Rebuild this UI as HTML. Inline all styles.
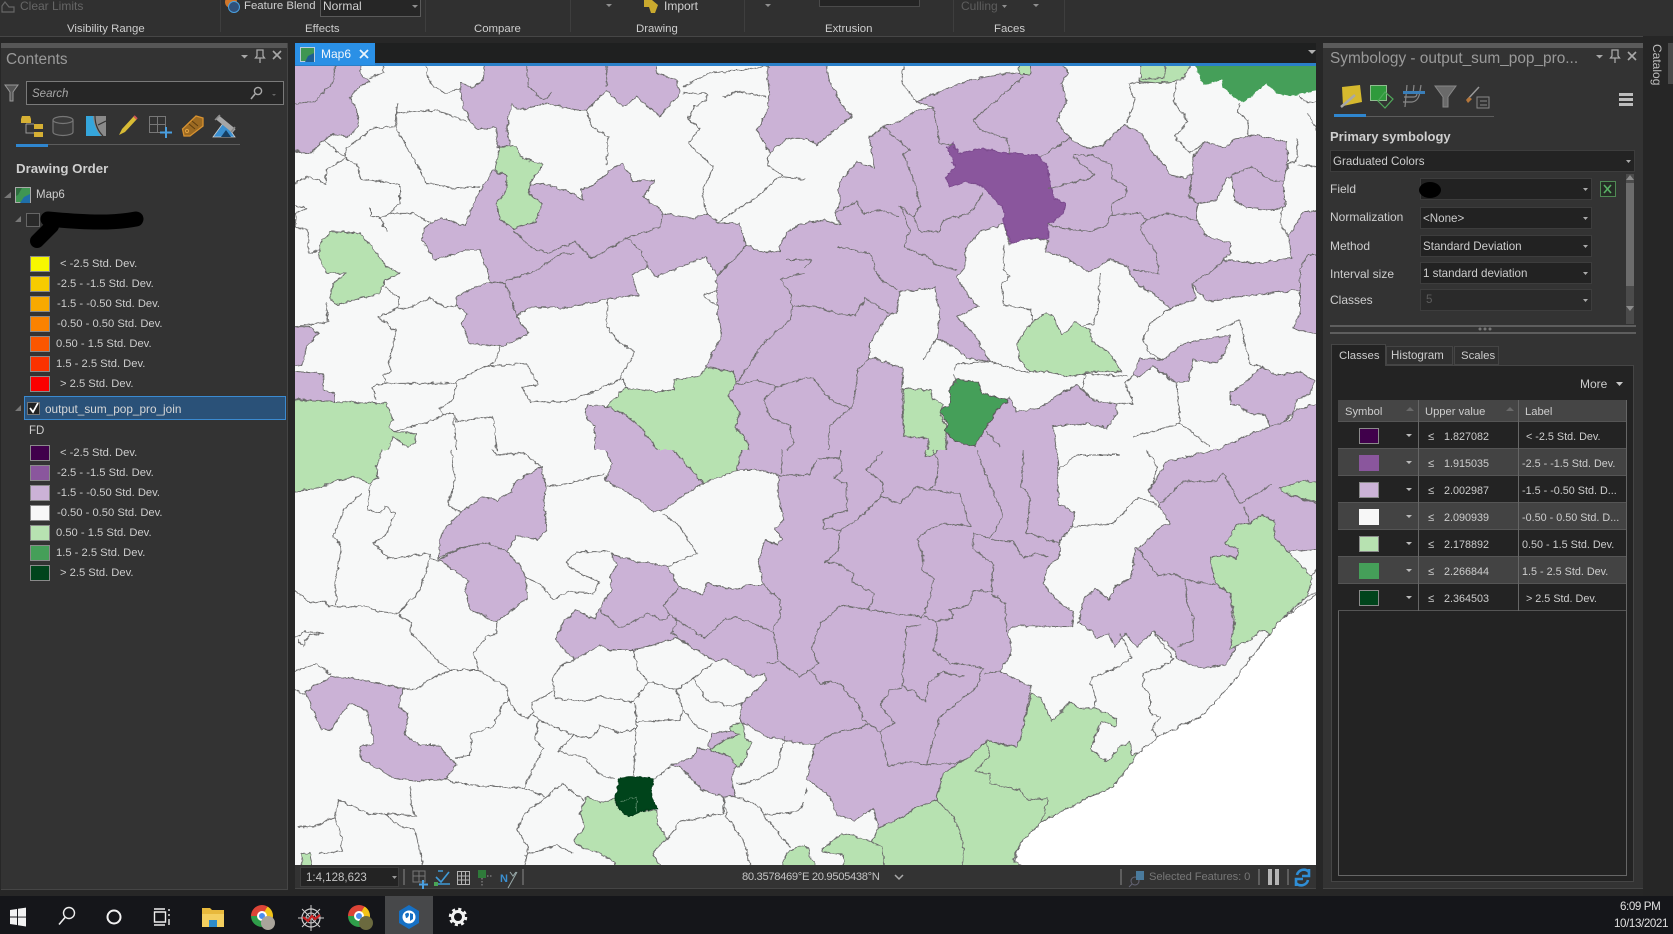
<!DOCTYPE html>
<html><head><meta charset="utf-8"><title>ArcGIS Pro</title>
<style>
html,body{margin:0;padding:0;background:#272727;}
#p{position:relative;width:1673px;height:934px;overflow:hidden;background:#272727;font-family:"Liberation Sans",sans-serif;color:#cfcfcf;}
.a{position:absolute;}
.t{position:absolute;white-space:nowrap;line-height:16px;font-size:11.2px;color:#cdcdcd;}
.sw{position:absolute;left:30px;width:18px;height:14px;border:1px solid #8a8a8a;}
.box{position:absolute;left:1420px;width:172px;background:#222;border:1px solid #3d3d3d;box-sizing:border-box;}
.ss{position:absolute;left:1359px;width:20px;height:16px;border:1px solid #8a8a8a;box-sizing:border-box;}
.row{position:absolute;left:1338px;width:288px;height:27px;box-sizing:border-box;border-bottom:1px solid #555;}
.chrome{position:absolute;width:22px;height:22px;border-radius:50%;background:conic-gradient(from 30deg,#f2c318 0 120deg,#2f9e4a 120deg 240deg,#dc4437 240deg 360deg);}
.chrome:after{content:"";position:absolute;left:6px;top:6px;width:6px;height:6px;background:#4a8ef0;border:2px solid #fff;border-radius:50%;}
#map{position:absolute;left:295px;top:66px;width:1021px;height:799px;overflow:hidden;background:#f7f8f8;}
#inner{position:absolute;left:-5px;top:-16px;width:1030px;height:820px;filter:url(#w);}
#inner svg{position:absolute;display:block;}
.P{fill:#cbb2d6;stroke:#6b6b6b;stroke-width:3;stroke-linejoin:round;}
.G{fill:#b7e2b1;stroke:#6b6b6b;stroke-width:3;stroke-linejoin:round;}
.D{fill:#459f59;stroke:#5a5a5a;stroke-width:3;stroke-linejoin:round;}
.L{fill:none;stroke:#6e6e6e;stroke-width:3;stroke-linejoin:round;}
</style></head><body><div id="p">

<svg width="0" height="0" style="position:absolute"><filter id="w" x="0" y="0" width="100%" height="100%" color-interpolation-filters="sRGB"><feTurbulence type="fractalNoise" baseFrequency="0.18" numOctaves="3" seed="4" result="n"/><feDisplacementMap in="SourceGraphic" in2="n" scale="4.5" xChannelSelector="R" yChannelSelector="G"/></filter></svg>

<!-- ribbon -->
<div class="a" style="left:0;top:0;width:1673px;height:36px;background:#303030;border-bottom:1px solid #464646"></div>
<div class="a" style="left:220px;top:0;width:1px;height:32px;background:#3e3e3e"></div>
<div class="a" style="left:425px;top:0;width:1px;height:32px;background:#3e3e3e"></div>
<div class="a" style="left:570px;top:0;width:1px;height:32px;background:#3e3e3e"></div>
<div class="a" style="left:744px;top:0;width:1px;height:32px;background:#3e3e3e"></div>
<div class="a" style="left:953px;top:0;width:1px;height:32px;background:#3e3e3e"></div>
<div class="a" style="left:1064px;top:0;width:1px;height:32px;background:#3e3e3e"></div>
<div class="t" style="left:20px;top:-2px;color:#666;font-size:12px">Clear Limits</div>
<div class="t" style="left:244px;top:-2px;font-size:11.4px;color:#d0d0d0">Feature Blend</div>
<div class="a" style="left:320px;top:-2px;width:99px;height:17px;background:#262626;border:1px solid #5a5a5a"></div>
<div class="t" style="left:323px;top:-2px;font-size:12px;color:#d0d0d0">Normal</div>
<div class="t" style="left:664px;top:-2px;font-size:12px;color:#d0d0d0">Import</div>
<div class="a" style="left:819px;top:-2px;width:99px;height:7px;background:#242424;border:1px solid #4a4a4a"></div>
<div class="t" style="left:961px;top:-2px;font-size:12px;color:#5e5e5e">Culling</div>
<div class="t" style="left:67px;top:21px;font-size:11.4px">Visibility Range</div>
<div class="t" style="left:305px;top:21px;font-size:11.4px">Effects</div>
<div class="t" style="left:474px;top:21px;font-size:11.4px">Compare</div>
<div class="t" style="left:636px;top:21px;font-size:11.4px">Drawing</div>
<div class="t" style="left:825px;top:21px;font-size:11.4px">Extrusion</div>
<div class="t" style="left:994px;top:21px;font-size:11.4px">Faces</div>

<!-- contents panel -->
<div class="a" style="left:1px;top:43px;width:286px;height:846px;background:#333;border-right:1px solid #454545;border-bottom:1px solid #454545;box-sizing:content-box"></div>
<div class="a" style="left:1px;top:43px;width:286px;height:5px;background:#565656"></div>
<div class="t" style="left:6px;top:51px;font-size:15.4px;line-height:18px;color:#9a9a9a">Contents</div>
<div class="a" style="left:26px;top:81px;width:258px;height:24px;box-sizing:border-box;background:#262626;border:1px solid #7a7a7a"></div>
<div class="t" style="left:32px;top:86px;font-style:italic;font-size:11.5px;color:#a8a8a8">Search</div>
<div class="a" style="left:16px;top:144px;width:224px;height:1px;background:#5c5c5c"></div>
<div class="a" style="left:16px;top:144px;width:32px;height:3px;background:#2f86cf"></div>
<div class="t" style="left:16px;top:161px;font-size:13.3px;font-weight:bold;color:#cfcfcf">Drawing Order</div>
<div class="t" style="left:36px;top:187px;font-size:11.5px">Map6</div>
<div class="a" style="left:26px;top:213px;width:14px;height:14px;box-sizing:border-box;background:#2a2a2a;border:1px solid #666"></div>

<div class="sw" style="top:256px;background:#f7f700"></div><div class="t" style="left:60px;top:256px">&lt; -2.5 Std. Dev.</div>
<div class="sw" style="top:276px;background:#f6cb00"></div><div class="t" style="left:57px;top:276px">-2.5 - -1.5 Std. Dev.</div>
<div class="sw" style="top:296px;background:#f8a900"></div><div class="t" style="left:57px;top:296px">-1.5 - -0.50 Std. Dev.</div>
<div class="sw" style="top:316px;background:#fa8200"></div><div class="t" style="left:57px;top:316px">-0.50 - 0.50 Std. Dev.</div>
<div class="sw" style="top:336px;background:#fa5600"></div><div class="t" style="left:56px;top:336px">0.50 - 1.5 Std. Dev.</div>
<div class="sw" style="top:356px;background:#fa3200"></div><div class="t" style="left:56px;top:356px">1.5 - 2.5 Std. Dev.</div>
<div class="sw" style="top:376px;background:#fa0000"></div><div class="t" style="left:60px;top:376px">&gt; 2.5 Std. Dev.</div>

<div class="a" style="left:24px;top:396px;width:262px;height:24px;box-sizing:border-box;background:#2a5178;border:1px solid #3b8ad0"></div>
<div class="a" style="left:27px;top:402px;width:13px;height:13px;box-sizing:border-box;background:#222;border:1px solid #777"></div>
<div class="t" style="left:45px;top:401px;font-size:11.8px;color:#d6d6d6">output_sum_pop_pro_join</div>
<div class="t" style="left:29px;top:423px;font-size:11.5px">FD</div>

<div class="sw" style="top:445px;background:#40004b"></div><div class="t" style="left:60px;top:445px">&lt; -2.5 Std. Dev.</div>
<div class="sw" style="top:465px;background:#8a569d"></div><div class="t" style="left:57px;top:465px">-2.5 - -1.5 Std. Dev.</div>
<div class="sw" style="top:485px;background:#cbb2d6"></div><div class="t" style="left:57px;top:485px">-1.5 - -0.50 Std. Dev.</div>
<div class="sw" style="top:505px;background:#f7f7f7"></div><div class="t" style="left:57px;top:505px">-0.50 - 0.50 Std. Dev.</div>
<div class="sw" style="top:525px;background:#b7e2b1"></div><div class="t" style="left:56px;top:525px">0.50 - 1.5 Std. Dev.</div>
<div class="sw" style="top:545px;background:#459f59"></div><div class="t" style="left:56px;top:545px">1.5 - 2.5 Std. Dev.</div>
<div class="sw" style="top:565px;background:#00441b"></div><div class="t" style="left:60px;top:565px">&gt; 2.5 Std. Dev.</div>

<!-- tab strip -->
<div class="a" style="left:295px;top:43px;width:1021px;height:20px;background:#1f2020"></div>
<div class="a" style="left:295px;top:63px;width:1021px;height:3px;background:#2a7fc8"></div>
<div class="a" style="left:295px;top:43px;width:80px;height:22px;background:#2a90e6"></div>
<div class="t" style="left:321px;top:46px;font-size:12px;color:#f0f6fb">Map6</div>

<!-- MAP -->
<div id="map"><div id="inner">
<svg style="left:0;top:0" width="515" height="400" viewBox="0 0 1545 1200">
<rect x="0" y="0" width="1600" height="1300" fill="#f7f8f8"/>
<path class="P" d="M-30,30 L215,30 L210,70 L235,95 L205,115 L180,140 L200,180 L205,230 L175,262 L130,250 L90,280 L60,312 L-30,295Z"/>
<path class="P" d="M585,30 L1100,30 L1100,70 L1160,90 L1170,130 L1110,200 L1040,140 L1000,170 L975,150 L950,120 L890,180 L860,180 L770,160 L690,180 L665,160 L650,235 L660,290 L620,290 L620,232 L565,240 L540,215 L515,150 L510,95 L545,115 L580,90Z"/>
<path class="P" d="M1440,30 L1600,30 L1600,270 L1530,265 L1490,265 L1440,310 L1400,240 L1430,190 L1440,130 L1430,70Z"/>
<path class="P" d="M610,360 L650,380 L650,420 L620,460 L630,510 L670,535 L740,515 L755,460 L715,430 L720,405 L760,400 L850,430 L880,450 L870,420 L910,405 L950,370 L975,350 L1000,340 L1030,395 L1095,390 L1060,440 L1100,470 L1120,490 L1210,505 L1250,490 L1285,520 L1350,520 L1370,590 L1340,620 L1280,675 L1245,620 L1175,650 L1100,680 L1075,650 L1025,675 L1045,735 L955,745 L830,775 L720,770 L680,800 L645,700 L600,695 L570,600 L530,600 L435,630 L395,570 L405,530 L455,505 L525,525 L560,440Z"/>
<path class="P" d="M605,695 L645,700 L680,800 L715,850 L635,890 L540,880 L515,820 L530,790 L500,765 L500,740 L550,715Z"/>
<path class="P" d="M-30,830 L60,830 L85,850 L50,890 L35,945 L-30,950Z"/>
<path class="P" d="M-30,960 L60,968 L100,970 L100,1020 L135,1030 L135,1056 L-30,1045Z"/>
<path class="P" d="M890,1065 L950,1070 L1000,1090 L1050,1130 L1110,1210 L915,1210 L915,1130 L885,1095Z"/>
<path class="P" d="M1600,525 L1530,525 L1490,545 L1470,590 L1470,605 L1410,605 L1370,585 L1340,620 L1280,680 L1280,720 L1285,800 L1295,860 L1245,950 L1330,965 L1340,1000 L1315,1035 L1350,1090 L1335,1130 L1375,1180 L1380,1220 L1600,1220Z"/>
<path class="G" d="M630,290 L680,290 L700,325 L760,345 L720,400 L715,430 L755,460 L740,515 L670,535 L630,510 L620,460 L650,420 L650,380 L615,358Z"/>
<path class="G" d="M95,570 L125,545 L210,550 L260,610 L290,650 L330,670 L285,690 L270,730 L210,745 L145,765 L120,745 L130,700 L170,670 L110,670 L85,620Z"/>
<path class="G" d="M-30,1048 L135,1056 L290,1060 L310,1110 L295,1130 L310,1145 L378,1150 L375,1180 L350,1190 L310,1160 L285,1220 L-30,1220Z"/>
<path class="G" d="M950,1070 L1005,1015 L1100,1025 L1150,1020 L1155,990 L1220,980 L1250,955 L1330,965 L1340,1000 L1315,1035 L1350,1090 L1335,1130 L1375,1180 L1380,1220 L1120,1220 L1050,1130 L1000,1090Z"/>
<path class="L" d="M15,160 L75,155 L130,95 L135,48 M710,48 L715,110 L760,150 L785,128 M950,48 L950,110
M670,540 L720,590 L770,610 L855,575 L880,600 L905,625 L1010,565 L1110,530 L1120,490 M645,695 L740,660 L815,610 L855,610 M1010,565 L1050,600 L1075,650
M1560,765 L1510,770 L1500,810 L1420,880 L1340,1000 M1340,1005 L1400,990 L1460,1010 L1560,980 M1460,1010 L1420,1050 L1440,1100 L1500,1130 L1510,1180 L1490,1200 M1470,690 L1500,680 L1560,665 M1470,690 L1500,730 L1510,770 M1490,630 L1560,630
M405,48 L420,100 L465,130 L510,115 M280,48 L280,70 L235,85 M320,160 L315,230 L250,235 L170,295 L165,320 L100,270 M320,160 L320,235 L350,290 L390,360 L410,400 L490,415 L570,410 M320,190 L440,180 L530,215
M165,325 L205,350 L210,385 L330,405 L330,460 L300,490 L370,490 L425,520 M15,300 L60,312 M165,325 L110,360 L105,400 L50,380 L15,400 M240,470 L240,500 L270,500 L290,545 L270,505 L300,490 M15,465 L50,475 L20,490 L15,530 L55,540 L55,610 L85,600
M285,710 L325,745 L325,775 L350,775 L420,745 L470,775 L500,765 M110,760 L115,815 L15,830 M325,775 L265,800 L305,835 L320,840 L305,900 L295,940 L305,965 L280,975 L285,1000 L245,1010 L260,1050 M285,1000 L490,1000 L500,995 L580,950 L710,940 L745,1005 L695,1010 L720,1055 L830,1055 L900,1030 L1000,985 M630,890 L620,930 L590,950 M955,745 L950,830 L990,880 L1035,905 L985,990 M1000,985 L1005,1015
M500,1000 L490,1050 L450,1075 L460,1095 L405,1120 L310,1145 M460,1095 L490,1090 L500,1115 L610,1100 L620,1200 M490,1100 L500,1200
M1180,130 L1250,130 L1250,150 L1210,170 L1195,210 L1230,235 L1195,280 L1270,350 L1235,430 L1250,490 M1180,110 L1260,70 L1440,48 M1295,140 L1350,125 L1430,140 M1285,515 L1400,440 L1475,375 L1430,345 L1440,310 M1475,380 L1560,390 M1285,720 L1240,735 L1285,770 M890,180 L905,230 L955,260 L950,345"/>
</svg>

<svg style="left:515px;top:0" width="515" height="400" viewBox="15 0 1545 1200">
<rect x="0" y="0" width="1600" height="1300" fill="#f7f8f8"/>
<path class="P" d="M-30,30 L75,30 L90,100 L130,170 L155,198 L110,235 L50,285 L0,255 L-30,250Z"/>
<path class="P" d="M-50,520 L0,525 L30,515 L75,512 L122,525 L105,490 L122,450 L115,420 L120,395 L170,335 L225,355 L208,262 L250,230 L300,215 L350,180 L402,175 L350,155 L430,120 L520,88 L620,68 L660,72 L660,30 L780,30 L805,70 L785,100 L800,150 L770,215 L810,265 L860,295 L910,285 L970,225 L1025,250 L1050,300 L1095,345 L1110,375 L1155,385 L1178,370 L1165,440 L1195,460 L1190,510 L1220,560 L1290,578 L1290,610 L1240,660 L1175,700 L1190,745 L1110,775 L1060,730 L1020,710 L990,670 L985,650 L930,628 L870,665 L790,620 L735,605 L745,570 L680,565 L630,580 L610,520 L590,530 L545,540 L500,590 L490,660 L470,680 L500,730 L535,770 L470,800 L520,850 L570,935 L500,925 L470,895 L410,865 L420,790 L405,712 L370,718 L300,725 L290,790 L262,798 L210,880 L210,922 L310,955 L305,1010 L310,1160 L385,1165 L385,1250 L-50,1250Z"/>
<path class="P" d="M1170,440 L1180,320 L1215,275 L1275,295 L1305,265 L1375,255 L1460,275 L1465,345 L1450,395 L1455,470 L1420,480 L1340,475 L1305,455 L1295,380 L1280,385 L1250,450 L1195,460Z"/>
<path class="P" d="M1600,480 L1510,485 L1465,560 L1475,625 L1370,640 L1270,630 L1240,660 L1175,700 L1220,755 L1320,740 L1500,720 L1500,790 L1480,835 L1560,855 L1600,855Z"/>
<path class="P" d="M1000,970 L1020,925 L1090,930 L1140,885 L1200,870 L1290,855 L1280,900 L1250,940 L1180,930 L1165,995 L1115,995 L1060,950 L1010,985Z"/>
<path class="P" d="M1290,1065 L1290,1030 L1350,985 L1385,950 L1430,975 L1500,965 L1545,995 L1530,1030 L1490,1050 L1480,1085 L1440,1125 L1410,1130 L1395,1095 L1345,1090 L1320,1065Z"/>
<path class="P" d="M1250,1200 L1330,1160 L1410,1130 L1470,1110 L1480,1085 L1550,1060 L1600,1060 L1600,1250 L1250,1250Z"/>
<path class="P" d="M600,1060 L630,1045 L650,1085 L720,1075 L775,1035 L830,1005 L880,1050 L950,1060 L950,1090 L920,1135 L860,1120 L760,1130 L775,1250 L440,1250 L440,1150Z"/>
<path class="G" d="M1025,30 L1180,30 L1150,85 L1100,100 L1020,95Z"/>
<path class="G" d="M655,30 L690,30 L690,72 L660,72Z"/>
<path class="D" d="M1178,30 L1600,30 L1600,115 L1500,130 L1470,140 L1430,130 L1400,100 L1330,160 L1270,115 L1265,90 L1210,105Z" style="stroke:none"/>
<path d="M460,280 L475,310 L545,295 L620,310 L710,315 L745,350 L750,400 L765,445 L795,460 L790,490 L745,525 L745,565 L680,565 L635,580 L610,520 L612,480 L550,410 L500,395 L450,410 L435,385 L465,350 L442,295Z" fill="#8a569d" stroke="#7a4a8c" stroke-width="3"/>
<path class="G" d="M650,880 L690,820 L740,790 L760,800 L785,855 L825,815 L870,840 L875,875 L925,905 L965,965 L880,965 L810,980 L740,965 L690,965 L660,930Z"/>
<path class="G" d="M310,1015 L395,1020 L395,1045 L430,1065 L420,1095 L445,1135 L435,1160 L445,1250 L385,1250 L385,1165 L310,1160Z"/>
<path class="D" d="M450,1010 L470,990 L535,995 L545,1030 L590,1040 L625,1050 L590,1080 L565,1125 L520,1190 L460,1170 L435,1140 L445,1125 L420,1085 L450,1060Z"/>
<path class="L" d="M310,48 L305,100 L350,155 M985,100 L1005,150 L980,220 M990,100 L1120,95 M1130,95 L1120,155 L1165,215 L1125,260 L1170,310 L1215,275 M1320,160 L1310,185 L1345,210 L1345,260 M1500,135 L1510,155 L1550,155 M1525,190 L1550,240 M1490,265 L1490,330 L1460,345 M1490,345 L1550,350 M1450,470 L1440,520 L1465,560
M610,585 L610,660 L630,680 L605,700 L610,765 L690,780 L700,810 M900,670 L895,770 L880,820 L850,825 M1110,775 L1050,820 L1030,870 L1050,910 L1090,930 M1250,840 L1320,810 L1335,880 L1350,940 L1385,950 M460,960 L470,940 L570,935 L690,970 M810,980 L860,970 L845,1015 L880,1050 M850,970 L985,980 M975,1000 L1000,1060 L950,1060 M975,1000 L1000,975 M1060,950 L1130,1000 L1140,1120 M1140,1120 L1230,1190 M1000,1160 L1140,1120 M410,865 L370,930 M460,970 L470,1000
M250,230 L330,300 L310,310 L345,400 L360,470 L340,500 L300,470 L330,540 L310,590 L380,620 L410,645 L470,660 M105,490 L170,455 L190,490 L240,480 L300,500 M115,590 L210,610 L240,690 L295,720 M0,770 L50,770 L90,785 L165,800 L195,745 L270,790 M0,980 L40,985 L90,1050 L155,1075 M175,960 L160,1070 L90,1125 L85,1200 M670,80 L520,210 L540,240 L620,265 L630,310 M400,175 L420,280 L460,285 M810,265 L720,320 M820,315 L870,315 L935,345 L935,385 L980,410 L975,440 L935,460 L935,495 L1020,490 L1040,510 L1020,540 L1070,610 L1075,670 L1000,660 M745,415 L870,385 L885,375 L820,320 M745,525 L815,540 L860,545 L915,530 L935,495 M1040,510 L1100,490 L1190,510 M340,500 L360,545 L420,545 L430,510 L510,490 L550,430 M0,665 L35,630 L0,625 M1295,375 L1355,350 L1410,390 L1450,395 M1500,720 L1500,660 L1525,615 L1600,615 M1095,48 L1090,85 L1025,85 M175,960 L210,922 M560,1145 L600,1190"/>
</svg>

<svg style="left:0;top:400px" width="515" height="420" viewBox="0 0 1545 1260">
<rect x="0" y="0" width="1600" height="1300" fill="#f7f8f8"/>
<path class="P" d="M450,270 L460,240 L510,190 L575,140 L620,150 L665,125 L670,100 L755,50 L770,115 L760,150 L770,240 L745,268 L680,255 L650,305 L590,280 L520,290 L445,325Z"/>
<path class="P" d="M445,330 L520,292 L590,278 L650,305 L690,345 L705,380 L712,445 L620,515 L540,480 L525,420 L535,390 L490,360Z"/>
<path class="P" d="M925,-50 L1105,-50 L1240,100 L1180,135 L1120,180 L1090,185 L1050,150 L945,90 L965,40Z"/>
<path class="G" d="M1105,-50 L1365,-50 L1340,60 L1280,85 L1240,100Z"/>
<path class="G" d="M-30,-50 L295,-50 L260,50 L265,85 L235,100 L190,80 L130,95 L80,115 L15,125 L-30,130Z"/>
<path class="P" d="M1340,60 L1410,60 L1465,75 L1465,135 L1480,210 L1455,235 L1475,265 L1460,285 L1425,270 L1405,335 L1420,405 L1370,405 L1340,420 L1250,400 L1240,435 L1165,410 L1135,350 L1040,335 L965,312 L980,350 L960,380 L965,420 L925,480 L915,510 L860,480 L825,510 L795,570 L855,630 L930,585 L960,600 L1030,600 L1160,565 L1210,595 L1280,635 L1300,625 L1390,680 L1425,670 L1430,690 L1405,715 L1355,760 L1350,810 L1430,860 L1560,885 L1650,885 L1650,-50 L1365,-50Z"/>
<path class="P" d="M45,725 L125,680 L190,685 L340,715 L325,770 L355,790 L345,855 L390,885 L445,885 L470,915 L498,945 L470,985 L390,995 L310,985 L260,955 L215,930 L210,890 L255,880 L240,830 L230,780 L180,760 L150,795 L120,845 L95,835 L70,785Z"/>
<path class="P" d="M1255,885 L1265,850 L1330,842 L1350,855 L1300,870 L1260,900Z"/>
<path class="G" d="M1320,830 L1360,815 L1365,865 L1385,880 L1370,915 L1350,950 L1335,945 L1320,920 L1260,900 L1300,870 L1350,855 L1325,842Z"/>
<path class="P" d="M1140,945 L1205,925 L1225,895 L1260,900 L1320,920 L1338,945 L1325,985 L1335,1040 L1300,1040 L1235,1020 L1170,950Z"/>
<path class="G" d="M850,1175 L885,1130 L870,1090 L890,1040 L930,1060 L975,1045 L985,1075 L1015,1100 L1050,1085 L1100,1080 L1105,1125 L1130,1165 L1085,1210 L1110,1245 L1110,1300 L985,1300 L970,1235 L930,1210 L880,1195Z"/>
<path d="M975,1040 L990,985 L1030,980 L1090,985 L1085,1030 L1100,1075 L1050,1085 L1015,1100 L985,1075Z" fill="#00441b" stroke="#003a17" stroke-width="3"/>
<path d="M990,1055 L1040,1040 L1040,1085" fill="none" stroke="#6f9a7c" stroke-width="2"/>
<path class="G" d="M35,1245 L35,1210 L60,1210 L70,1270 L35,1270Z"/>
<path class="G" d="M1480,1230 L1500,1200 L1560,1180 L1650,1180 L1650,1300 L1480,1300Z"/>
<path class="L" d="M605,0 L620,15 L700,10 L755,50 M485,0 L495,90 L475,165 L515,190 M770,110 L840,100 L945,70 M240,100 L235,180 L270,190 L285,170 L315,190 L290,250 L250,280 L295,325 L420,310 L415,345 L390,420 L325,490 L265,485 L230,470 L120,470 L100,455 L60,460 L15,420 M215,130 L160,180 L130,260 L155,290 L135,400 L140,465 M420,325 L445,330 M325,495 L365,520 L360,545 L440,630 L480,660 L415,690 L375,720 L340,715 M620,515 L620,550 L590,560 L550,610 L565,660 L480,660 M565,660 L650,710 L655,750 L640,760 L610,830 L545,850 L540,915 L495,925 M655,750 L680,790 L710,805 L730,790 L725,760 L790,720 L790,680 L820,640 L855,630 M730,795 L745,810 L735,870 L760,895 L700,1015 L770,1040 L815,1000 L880,1050 M745,810 L850,855 L905,865 L930,825 L985,850 L1040,835 M790,720 L795,745 L880,755 L930,740 L1030,755 L1075,695 L1160,720 L1210,685 L1270,640 M1030,600 L1045,660 L1075,695 M1035,760 L1040,830 L1030,980 M1040,815 L1170,810 L1180,780 L1160,720 M1180,780 L1220,830 L1255,845 M850,855 L805,905 L890,925 L900,945 L940,980 L975,985 M1210,685 L1250,750 L1325,770 L1355,760 M470,985 L480,995 L550,1005 L700,1015 M360,1005 L365,1075 L380,1100 L285,1090 L320,1125 L375,1140 L400,1245 M145,1050 L135,1100 L155,1160 L155,1205 L85,1210 M135,1100 L75,1130 L20,1130 M145,1050 L230,1090 L285,1090 M770,1040 L705,1090 L680,1140 L715,1190 L705,1245 M705,1215 L800,1185 L850,1210 M15,720 L45,735 M15,665 L80,640 L125,675 M1130,1170 L1170,1115 L1300,1090 L1300,1040 M1300,1040 L1310,1100 L1360,1170 L1380,1245 M1335,1040 L1410,1070 L1420,1095 L1500,1190 M1340,1000 L1370,1000 L1460,960 L1485,860 M1420,1095 L1520,1085 L1560,1040 M1090,990 L1140,950 M15,560 L50,545 L100,550 L55,555 L40,590 L20,570 M825,340 L860,305 L960,305 M825,340 L880,375 L930,395 L910,430 L830,425 L790,450 L760,410 L705,380 M1130,350 L1220,310 L1170,230 L1120,190
M930,480 L990,535 L1075,490 L1120,510 L1140,495 L1245,565 L1300,510 L1340,500 L1450,545 L1465,630 M1120,465 L1165,415 M1120,465 L1140,495 L1160,510 L1145,550 L1210,595 M1420,405 L1470,450 L1470,500 L1450,540 M1430,640 L1470,635 L1530,680 L1560,660 M1475,0 L1475,70 M1465,75 L1560,80"/>
</svg>

<svg style="left:515px;top:400px" width="515" height="420" viewBox="15 0 1545 1260">
<rect x="0" y="0" width="1600" height="1300" fill="#f7f8f8"/>
<path d="M640,1245 L660,1180 L725,1115 L870,1040 L940,1010 L1015,910 L1075,860 L1210,795 L1310,680 L1410,550 L1440,510 L1548,435 L1650,420 L1650,1300 L640,1300Z" fill="#fff" stroke="#6b6b6b" stroke-width="3"/>
<path class="P" d="M-50,-50 L770,-50 L775,60 L775,160 L825,190 L815,235 L780,270 L780,320 L745,350 L728,400 L780,460 L820,485 L818,530 L640,528 L625,545 L635,610 L600,665 L695,710 L665,850 L650,890 L560,875 L500,925 L430,970 L410,1050 L345,1075 L310,1100 L235,1135 L220,1075 L165,1110 L110,1095 L90,1040 L20,985 L45,885 L-50,880Z"/>
<path class="G" d="M375,-30 L415,-30 L410,10 L380,20Z"/>
<path class="P" d="M835,520 L850,450 L885,415 L925,450 L950,405 L995,385 L1005,295 L1025,290 L1080,230 L1110,220 L1075,160 L1045,125 L1100,35 L1240,0 L1250,-50 L1650,-50 L1650,150 L1548,160 L1470,135 L1437,115 L1650,90 L1650,300 L1540,300 L1465,305 L1425,265 L1420,210 L1385,195 L1350,220 L1310,225 L1275,285 L1315,295 L1310,325 L1270,315 L1230,325 L1245,400 L1290,430 L1300,510 L1305,600 L1275,645 L1205,655 L1130,625 L1115,590 L1060,545 L1010,590 L975,550 L945,590 L925,550 L890,565 L860,530Z"/>
<path class="G" d="M1230,325 L1270,315 L1310,325 L1315,295 L1275,285 L1310,225 L1350,220 L1385,195 L1420,210 L1425,265 L1465,305 L1535,380 L1525,435 L1440,510 L1410,550 L1385,540 L1350,570 L1290,595 L1305,510 L1290,430 L1245,400Z"/>
<path class="G" d="M1437,115 L1510,92 L1600,105 L1600,170 L1470,135Z"/>
<path class="G" d="M410,1050 L430,970 L500,925 L560,875 L650,890 L665,850 L695,730 L725,745 L755,815 L810,755 L840,775 L885,775 L950,805 L945,830 L905,815 L870,895 L920,935 L960,890 L990,875 L995,915 L1015,910 L940,1010 L870,1040 L725,1115 L660,1180 L640,1230 L660,1245 L660,1300 L260,1300 L215,1175 L235,1135 L310,1100 L345,1075Z"/>
<path class="G" d="M65,1200 L125,1150 L215,1175 L245,1190 L260,1300 L135,1300 L130,1215 L70,1205Z"/>
<path class="G" d="M-30,1185 L20,1190 L50,1260 L-30,1270Z"/>
<path class="L" d="M120,0 L125,65 L100,85 L140,100 L140,180 L70,210 L70,235 L120,240 L115,300 L75,340 L100,335 L160,370 L155,395 L225,430 L205,480 M50,25 L120,25 M0,70 L25,75 L50,30 M250,0 L200,60 L250,100 L245,140 L300,160 L350,110 L390,120 L410,95 L415,40 L400,0 M530,0 L555,70 L610,195 L570,265 L520,250 M245,140 L170,210 L120,240 M390,120 L480,130 L500,205 L515,230 L430,220 L385,240 L350,270 L370,320 L365,360 L400,385 L385,460 L365,500 L205,480 M520,250 L520,295 L580,345 L575,425 L520,420 L505,465 L450,480 L460,505 L410,515 L370,500 M575,270 L640,275 L670,325 L710,310 L745,320 M670,0 L665,110 L690,140 L680,250 L780,280 M575,430 L615,460 L620,545 M410,515 L410,570 L400,600 L450,640 L490,640 L550,655 L530,710 L420,800 L380,945 M365,525 L320,530 L305,710 L340,725 L375,755 L385,700 L430,665 L490,680 M305,715 L270,720 L240,765 L285,820 L240,845 L265,950 L320,935 L380,945 L470,940 L500,925 M205,480 L125,465 L60,520 L35,600 L55,640 L30,660 L60,700 L110,695 L175,760 L190,810 L240,845 L205,820 L180,835 L100,850 L45,885 M30,660 L0,680 M555,670 L600,665
M1155,390 L1160,460 L1180,500 L1180,570 L1130,590 M1155,390 L1245,405 M1010,290 L1075,380 L1120,370 L1155,390 M1080,160 L1150,95 L1250,95 L1270,70 L1320,160 L1415,105 M1330,170 L1350,220
M410,1050 L460,1100 L490,1180 L490,1245 M560,880 L570,915 L525,965 L570,970 L570,1000 L660,1020 L680,1050 L745,1045 L725,1115
M995,625 L935,660 L880,680 L870,700 L890,750 L880,775 M960,550 L995,625 M1030,670 L1110,640 L1120,625 L1060,545 M1030,670 L1030,710 L1050,740 L1050,790 L1080,800 L1055,840 L1075,860 M775,60 L830,15 L870,15 L960,15 M1045,125 L1060,100 L1070,50 L1040,0 M810,230 L900,225 L940,220 L1015,140 L1070,165 M0,1080 L20,1015 M1525,435 L1548,430 M1535,380 L1548,360"/>
</svg>
</div></div>

<!-- status bar -->
<div class="a" style="left:295px;top:865px;width:1021px;height:24px;background:#333;border-bottom:1px solid #454545;box-sizing:border-box"></div>
<div class="a" style="left:300px;top:867px;width:99px;height:20px;background:#232323;border:1px solid #3e3e3e;box-sizing:border-box"></div>
<div class="t" style="left:306px;top:870px;font-size:11.5px;color:#c4c4c4">1:4,128,623</div>
<div class="t" style="left:742px;top:869px;font-size:11.2px;letter-spacing:-.33px;color:#c4c4c4">80.3578469°E 20.9505438°N</div>
<div class="t" style="left:1149px;top:869px;font-size:11.2px;letter-spacing:-.1px;color:#777">Selected Features: 0</div>

<!-- symbology panel -->
<div class="a" style="left:1323px;top:43px;width:320px;height:846px;background:#333;border-bottom:1px solid #454545;box-sizing:border-box"></div>
<div class="a" style="left:1323px;top:43px;width:320px;height:5px;background:#5a5a5a"></div>
<div class="t" style="left:1330px;top:50px;font-size:15.4px;line-height:18px;color:#9a9a9a">Symbology - output_sum_pop_pro...</div>
<div class="a" style="left:1643px;top:36px;width:30px;height:860px;background:#262626"></div>
<div class="a" style="left:1668px;top:43px;width:5px;height:41px;background:#4a4a4a"></div>
<div class="t" style="left:1637px;top:56px;font-size:12px;color:#bdbdbd;transform:rotate(90deg);width:40px;text-align:center">Catalog</div>
<div class="a" style="left:1334px;top:116px;width:160px;height:1px;background:#5c5c5c"></div>
<div class="a" style="left:1334px;top:114px;width:32px;height:3px;background:#2f86cf"></div>
<div class="t" style="left:1330px;top:129px;font-size:13px;font-weight:bold;color:#cfcfcf">Primary symbology</div>
<div class="a" style="left:1330px;top:150px;width:305px;height:22px;background:#232323;border:1px solid #3d3d3d;box-sizing:border-box"></div>
<div class="t" style="left:1333px;top:154px;font-size:11.6px">Graduated Colors</div>
<div class="t" style="left:1330px;top:181px;font-size:12px">Field</div>
<div class="t" style="left:1330px;top:209px;font-size:12px">Normalization</div>
<div class="t" style="left:1330px;top:238px;font-size:12px">Method</div>
<div class="t" style="left:1330px;top:266px;font-size:12px">Interval size</div>
<div class="t" style="left:1330px;top:292px;font-size:12px">Classes</div>
<div class="box" style="top:178px;height:22px"></div>
<div class="box" style="top:207px;height:22px"></div><div class="t" style="left:1423px;top:211px;font-size:11.6px">&lt;None&gt;</div>
<div class="box" style="top:235px;height:22px"></div><div class="t" style="left:1423px;top:239px;font-size:11.6px">Standard Deviation</div>
<div class="box" style="top:262px;height:22px"></div><div class="t" style="left:1423px;top:266px;font-size:11.6px">1 standard deviation</div>
<div class="box" style="top:289px;height:22px;background:#2a2a2a"></div><div class="t" style="left:1426px;top:292px;font-size:11.6px;color:#5c5c5c">5</div>
<div class="a" style="left:1626px;top:174px;width:8px;height:150px;background:#4b4b4b"></div>
<div class="a" style="left:1626px;top:183px;width:8px;height:103px;background:#6c6c6c"></div>
<div class="a" style="left:1330px;top:325px;width:306px;height:2px;background:#5e5e5e"></div>
<div class="a" style="left:1330px;top:332px;width:306px;height:2px;background:#5e5e5e"></div>

<!-- tabs -->
<div class="a" style="left:1331px;top:365px;width:303px;height:517px;background:#232323;border:1px solid #454545;box-sizing:border-box"></div>
<div class="a" style="left:1386px;top:346px;width:67px;height:19px;background:#303030;border:1px solid #454545;box-sizing:border-box"></div>
<div class="a" style="left:1454px;top:346px;width:45px;height:19px;background:#303030;border:1px solid #454545;box-sizing:border-box"></div>
<div class="a" style="left:1331px;top:344px;width:55px;height:22px;background:#232323;border:1px solid #454545;border-bottom:none;box-sizing:border-box"></div>
<div class="t" style="left:1339px;top:348px;font-size:11.4px">Classes</div>
<div class="t" style="left:1391px;top:348px;font-size:11.6px">Histogram</div>
<div class="t" style="left:1461px;top:348px;font-size:11.4px">Scales</div>
<div class="t" style="left:1580px;top:376px;font-size:12px">More</div>

<!-- table -->
<div class="a" style="left:1338px;top:400px;width:289px;height:476px;box-sizing:border-box;border:1px solid #666;background:#232323"></div>
<div class="row" style="top:400px;height:22px;background:#454545"></div>
<div class="row" style="top:422px;background:#232323"></div>
<div class="row" style="top:449px;background:#434343"></div>
<div class="row" style="top:476px;background:#232323"></div>
<div class="row" style="top:503px;background:#434343"></div>
<div class="row" style="top:530px;background:#232323"></div>
<div class="row" style="top:557px;background:#434343"></div>
<div class="row" style="top:584px;background:#232323"></div>
<div class="a" style="left:1418px;top:400px;width:1px;height:211px;background:#666"></div>
<div class="a" style="left:1518px;top:400px;width:1px;height:211px;background:#666"></div>
<div class="t" style="left:1345px;top:404px;font-size:11.2px">Symbol</div>
<div class="t" style="left:1425px;top:404px;font-size:11.2px">Upper value</div>
<div class="t" style="left:1525px;top:404px;font-size:11.2px">Label</div>

<div class="ss" style="top:428px;background:#40004b"></div>
<div class="ss" style="top:455px;background:#8a569d;border-color:#8a569d"></div>
<div class="ss" style="top:482px;background:#cbb2d6"></div>
<div class="ss" style="top:509px;background:#f7f7f7;border-color:#f7f7f7"></div>
<div class="ss" style="top:536px;background:#b7e2b1"></div>
<div class="ss" style="top:563px;background:#459f59;border-color:#459f59"></div>
<div class="ss" style="top:590px;background:#00441b"></div>

<div class="t" style="left:1428px;top:429px">≤</div><div class="t" style="left:1444px;top:429px;font-size:10.8px">1.827082</div><div class="t" style="left:1526px;top:429px;font-size:10.8px">&lt; -2.5 Std. Dev.</div>
<div class="t" style="left:1428px;top:456px">≤</div><div class="t" style="left:1444px;top:456px;font-size:10.8px">1.915035</div><div class="t" style="left:1522px;top:456px;font-size:10.8px">-2.5 - -1.5 Std. Dev.</div>
<div class="t" style="left:1428px;top:483px">≤</div><div class="t" style="left:1444px;top:483px;font-size:10.8px">2.002987</div><div class="t" style="left:1522px;top:483px;font-size:10.8px">-1.5 - -0.50 Std. D...</div>
<div class="t" style="left:1428px;top:510px">≤</div><div class="t" style="left:1444px;top:510px;font-size:10.8px">2.090939</div><div class="t" style="left:1522px;top:510px;font-size:10.8px">-0.50 - 0.50 Std. D...</div>
<div class="t" style="left:1428px;top:537px">≤</div><div class="t" style="left:1444px;top:537px;font-size:10.8px">2.178892</div><div class="t" style="left:1522px;top:537px;font-size:10.8px">0.50 - 1.5 Std. Dev.</div>
<div class="t" style="left:1428px;top:564px">≤</div><div class="t" style="left:1444px;top:564px;font-size:10.8px">2.266844</div><div class="t" style="left:1522px;top:564px;font-size:10.8px">1.5 - 2.5 Std. Dev.</div>
<div class="t" style="left:1428px;top:591px">≤</div><div class="t" style="left:1444px;top:591px;font-size:10.8px">2.364503</div><div class="t" style="left:1526px;top:591px;font-size:10.8px">&gt; 2.5 Std. Dev.</div>

<!-- taskbar -->
<div class="a" style="left:0;top:896px;width:1673px;height:38px;background:#15161a"></div>
<div class="a" style="left:385px;top:896px;width:48px;height:38px;background:#47484a"></div>
<div class="t" style="left:1620px;top:899px;font-size:11.6px;letter-spacing:-.4px;color:#e0e0e0">6:09 PM</div>
<div class="t" style="left:1614px;top:916px;font-size:11.6px;letter-spacing:-.4px;color:#e0e0e0">10/13/2021</div>
<div class="chrome" style="left:251px;top:905px"></div>
<div class="chrome" style="left:348px;top:905px"></div>
<div class="a" style="left:261px;top:916px;width:14px;height:14px;border-radius:50%;background:#a9a49b"></div>
<div class="a" style="left:359px;top:916px;width:14px;height:14px;border-radius:50%;background:#6b6a3f"></div>

<!-- icon overlay -->
<svg class="a" style="left:0;top:0;pointer-events:none" width="1673" height="934" viewBox="0 0 1673 934">
<!-- ribbon icons -->
<path d="M2,12 L14,12 L14,7 L9,7 L5,2 L2,6Z" fill="none" stroke="#666" stroke-width="1.2"/>
<circle cx="231" cy="2" r="6" fill="#d0762a"/><circle cx="234" cy="7" r="5.5" fill="#30507a" stroke="#4aa0e0"/>
<path d="M412,5 l6,0 l-3,3z M606,4 l6,0 l-3,3z M765,4 l6,0 l-3,3z M1002,5 l5,0 l-2.5,3z M1033,4 l6,0 l-3,3z" fill="#8f8f8f"/>
<path d="M644,0 h8 l6,5 l-3,8 h-4 l-2,-6 h-5z" fill="#c9a92e"/>
<!-- contents header -->
<path d="M241,55 l7,0 l-3.5,3.5z" fill="#a8a8a8"/>
<path d="M257,50 h6 v6 l1.5,2 h-9 l1.5,-2z M260,58 v5" fill="none" stroke="#a8a8a8" stroke-width="1.3"/>
<path d="M273,51 l8,8 M281,51 l-8,8" stroke="#a8a8a8" stroke-width="1.6"/>
<path d="M5,85 h13 l-5,7 v9 h-3 v-9z" fill="#555" stroke="#999" stroke-width="1"/>
<circle cx="258" cy="91" r="3.6" fill="none" stroke="#a8a8a8" stroke-width="1.4"/><path d="M255,94 l-4,5" stroke="#a8a8a8" stroke-width="1.6"/>
<path d="M272,94 l4,0 l-2,2z" fill="#666"/>
<!-- contents tools -->
<path d="M26,124 v9 h8 M26,124 h8" fill="none" stroke="#999" stroke-width="1"/>
<path d="M22,116 h8 l1,3 v4 h-10 v-4z M34,124 h9 v5 h-9z M34,132 h9 v5 h-9z" fill="#d6b034"/>
<path d="M53,120 v12 a10,3.5 0 0 0 20,0 v-12" fill="#3b3b3b" stroke="#777" stroke-width="1.2"/><ellipse cx="63" cy="120" rx="10" ry="3.5" fill="#3b3b3b" stroke="#777" stroke-width="1.2"/>
<rect x="86" y="116" width="20" height="20" fill="#8a8a8a"/><path d="M86,116 h7 q1,12 8,20 h-15z" fill="#35a6dc"/><path d="M95,116 q0,12 8,20 M98,125 l8,-4" stroke="#333" stroke-width="1.2" fill="none"/>
<path d="M119,135 l3,-6 l12,-13 l3,3 l-12,13z" fill="#d8bb35"/><path d="M134,116 l3,3" stroke="#c55" stroke-width="2"/>
<path d="M149.500,116.500 h16 v16 h-16z M157.500,116.500 v16 M149.500,124.500 h16" fill="none" stroke="#777" stroke-width="1"/><path d="M166,127 v11 M160,132.500 h12" stroke="#4a9fe0" stroke-width="2"/>
<path d="M182.500,129 L196,116 L203,118 L203,126 L190,136 L184,136Z" fill="#9c6a22" stroke="#d89230" stroke-width="1.300"/><path d="M189,124 l6,5 M192,121 l6,5" stroke="#5e3d10"/><circle cx="187" cy="131" r="1.600" fill="none" stroke="#e0a040"/>
<path d="M213,137 L224,122 L235,137Z" fill="#3a8fd0" stroke="#d0d0d0" stroke-width=".8"/><path d="M221,137 l5,-7 l5,7z" fill="#163f63"/><path d="M217,117 L234,131" stroke="#a6a6a6" stroke-width="5"/><path d="M220,115 l-5,5 M235,127 l-4,5" stroke="#888" stroke-width="1.500"/>
<!-- tree triangles -->
<path d="M4,198 l7,0 l0,-6z M15,222 l6,0 l0,-6z M15,411 l6,0 l0,-6z" fill="#777"/>
<!-- map icons -->
<rect x="15.500" y="187.500" width="15" height="15" fill="#3f9652" stroke="#aaa"/><path d="M20,203 l4,-6 l6,-3 v9z" fill="#1f6ea8"/><path d="M16,188 h6 l-4,7 l-2,1z" fill="#2f6e40"/>
<rect x="300.500" y="47.500" width="14" height="14" fill="#3f9652" stroke="#bcd"/><path d="M305,62 l3,-6 l6,-3 v9z" fill="#1f5e90"/>
<path d="M360,50 l8,8 M368,50 l-8,8" stroke="#eaf4fc" stroke-width="1.8"/>
<path d="M1308,50 l8,0 l-4,4z" fill="#b0b0b0"/>
<!-- scribbles -->
<path d="M48,219 C80,222 110,224 136,219" stroke="#000" stroke-width="15" stroke-linecap="round" fill="none"/>
<path d="M52,226 L37,241" stroke="#000" stroke-width="14" stroke-linecap="round" fill="none"/>
<ellipse cx="1430" cy="190" rx="11" ry="8" fill="#000"/>
<!-- checkmark -->
<path d="M30,408 l3,4 l5,-9" fill="none" stroke="#fff" stroke-width="1.8"/>
<!-- symbology header -->
<path d="M1596,55 l7,0 l-3.500,3.500z" fill="#a8a8a8"/>
<path d="M1612,50 h6 v6 l1.500,2 h-9 l1.500,-2z M1615,58 v5" fill="none" stroke="#a8a8a8" stroke-width="1.3"/>
<path d="M1628,52 l8,8 M1636,52 l-8,8" stroke="#a8a8a8" stroke-width="1.6"/>
<path d="M1342,87 L1360,85 L1362,102 L1343,106Z" fill="#d6b92e"/><path d="M1341,107 L1355,95" stroke="#a8a8a8" stroke-width="2.5"/>
<rect x="1370.500" y="85.500" width="16" height="15" fill="#2f9a3c" stroke="#8fbd8f"/><path d="M1378,101 l7,-9 l8,7 l-8,9z" fill="none" stroke="#4fa85a" stroke-width="1.2"/>
<path d="M1407,85 l-2,22 M1414,85 l-1,9 M1421,85 l-1,6 q-1,10 -8,11 h-9 M1404,97 h10 q3,0 3,-4" fill="none" stroke="#888" stroke-width="1.2"/><rect x="1403" y="91" width="22" height="3" fill="#3a7eb8"/>
<path d="M1435,86 h21 l-8,11 v10 h-5 v-10z" fill="#6a6a6a" stroke="#888"/>
<path d="M1467,100 l12,-13" stroke="#999" stroke-width="1.500"/><path d="M1466,100 l3,-3 l3,2 l-4,4z" fill="#b5763a"/><path d="M1477,97 h12 v11 h-12z M1480,101 h7 M1480,105 h7" fill="none" stroke="#888"/>
<path d="M1619,93 h14 v3 h-14z M1619,98 h14 v3 h-14z M1619,103 h14 v3 h-14z" fill="#bdbdbd"/>
<!-- dropdown arrows -->
<path d="M1626,160 l5,0 l-2.500,3z M1583,188 l5,0 l-2.500,3z M1583,217 l5,0 l-2.500,3z M1583,245 l5,0 l-2.500,3z M1583,272 l5,0 l-2.500,3z M1583,299 l5,0 l-2.500,3z" fill="#aaa"/>
<rect x="1600.500" y="181.500" width="15" height="15" fill="#252c25" stroke="#4f8a54"/><path d="M1604,185 l7,8 M1611,185 l-7,8" stroke="#59b065" stroke-width="1.600"/>
<path d="M1626,180 l8,0 l-4,-5z M1626,306 l8,0 l-4,5z" fill="#8c8c8c"/>
<circle cx="1480" cy="329" r="1.500" fill="#777"/><circle cx="1485" cy="329" r="1.500" fill="#777"/><circle cx="1490" cy="329" r="1.500" fill="#777"/>
<path d="M1616,382 l7,0 l-3.500,4z" fill="#c8c8c8"/>
<path d="M1406,411 l4,-4 l4,4z M1506,411 l4,-4 l4,4z" fill="#6a6a6a"/>
<path d="M1406,434 l6,0 l-3,3z M1406,461 l6,0 l-3,3z M1406,488 l6,0 l-3,3z M1406,515 l6,0 l-3,3z M1406,542 l6,0 l-3,3z M1406,569 l6,0 l-3,3z M1406,596 l6,0 l-3,3z" fill="#bbb"/>
<!-- status icons -->
<path d="M392,873 l5,0 l-2.500,3z" fill="#999" transform="translate(0,3)"/>
<path d="M404,869 v16 M523,869 v16 M1121,869 v16 M1259,869 v16 M1288,869 v16" stroke="#888" stroke-width="1"/>
<path d="M413,871 h12 v11 h-12z M419,871 v11 M413,876 h12" fill="none" stroke="#777"/><path d="M423,880 v9 M419,884.500 h9" stroke="#4a9fe0" stroke-width="2"/>
<path d="M435,884 h15 M436,877 l5,5 l8,-10 M438,871 h5" fill="none" stroke="#3f9ad6" stroke-width="1.600"/><rect x="434" y="882" width="4" height="4" fill="#4aa456"/>
<path d="M457.500,871.500 h12 v13 h-12z M461.500,871.500 v13 M465.500,871.500 v13 M457.500,876 h12 M457.500,880 h12" fill="none" stroke="#b5b5b5"/>
<rect x="478" y="870" width="8" height="8" fill="#2f7a3a"/><path d="M482,878 v8 M487,876 h6" stroke="#999" stroke-dasharray="1.500 1.500"/>
<text x="500" y="882" font-family="Liberation Sans,sans-serif" font-weight="bold" font-size="11" fill="#3a8fd0">N</text><path d="M508,888 l9,-16 M510,872 l3,4 l3,-4" fill="none" stroke="#9aa" stroke-width="1"/>
<path d="M895,875 l4,4 l4,-4" fill="none" stroke="#aaa" stroke-width="1.500"/>
<circle cx="1135" cy="881" r="4" fill="none" stroke="#667"/><rect x="1136" y="871" width="8" height="9" fill="#4a7a9c"/><path d="M1132,884 l-3,3" stroke="#667"/>
<rect x="1268" y="869" width="4" height="16" fill="#b5b5b5"/><rect x="1275" y="869" width="4" height="16" fill="#b5b5b5"/>
<path d="M1297,875 a7,7 0 0 1 12,-3 l0,-3 v7 h-7 M1308,880 a7,7 0 0 1 -12,3 v3 v-7 h7" fill="none" stroke="#2f8ed6" stroke-width="2.600"/>
<!-- taskbar icons -->
<path d="M10,910 l7,-1 v7.500 h-7z M18,908.800 l8,-1.200 v9 h-8z M10,917.500 h7 v7.500 l-7,-1z M18,917.500 h8 v9 l-8,-1.200z" fill="#f2f2f2"/>
<circle cx="69" cy="913" r="5.500" fill="none" stroke="#eee" stroke-width="1.400"/><path d="M65,917.500 l-6,7" stroke="#eee" stroke-width="1.600"/>
<circle cx="114" cy="917" r="6.500" fill="none" stroke="#f2f2f2" stroke-width="2"/>
<path d="M154,909 h11 M154,925 h11 M154.500,912 h11 v10 h-11z" fill="none" stroke="#eee" stroke-width="1.400"/><path d="M169,909 v2 M169,914 v2 M169,919 v6" stroke="#eee" stroke-width="1.400"/>
<path d="M202,908 h8 l2,2 h12 v17 h-22z" fill="#e8b93c"/><path d="M202,914 h22 v13 h-22z" fill="#f4cf5f"/><rect x="209" y="920" width="8" height="7" fill="#2e8bc9"/>
<circle cx="311" cy="918" r="9" fill="none" stroke="#cfcfcf" stroke-width="1.200"/><circle cx="311" cy="918" r="5" fill="none" stroke="#cfcfcf"/><path d="M298,918 h26 M311,905 v26 M302,909 l18,18 M320,909 l-18,18" stroke="#cfcfcf"/><path d="M303,917 l5,4 l4,-5 l3,3 l5,-4" fill="none" stroke="#c22" stroke-width="2.200"/>
<path d="M409,905 l10,6 v12 l-10,6 l-10,-6 v-12z" fill="#1670c4"/><circle cx="409" cy="917" r="6.500" fill="#fff"/><path d="M405,914 q4,-3 4,1 q-1,3 -3,3z M410,913 l3,1 l0,5 l-3,2z" fill="#1670c4"/>
<circle cx="458" cy="917" r="5.500" fill="none" stroke="#f2f2f2" stroke-width="3"/><circle cx="458" cy="917" r="8" fill="none" stroke="#f2f2f2" stroke-width="2.500" stroke-dasharray="3.100 3.180"/>
</svg>
</div></body></html>
